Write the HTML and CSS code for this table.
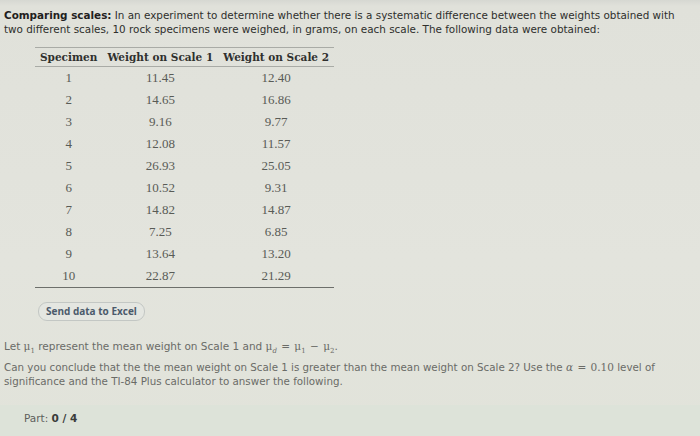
FILE: index.html
```html
<!DOCTYPE html>
<html lang="en">
<head>
<meta charset="utf-8">
<title>Comparing scales</title>
<link rel="stylesheet" href="styles.css">
</head>
<body>
<main class="page">
  <p class="intro"><b>Comparing scales:</b> In an experiment to determine whether there is a systematic difference between the weights obtained with two different scales, 10 rock specimens were weighed, in grams, on each scale. The following data were obtained:</p>

  <table class="data">
    <thead>
      <tr><th>Specimen</th><th>Weight on Scale 1</th><th>Weight on Scale 2</th></tr>
    </thead>
    <tbody>
      <tr><td>1</td><td>11.45</td><td>12.40</td></tr>
      <tr><td>2</td><td>14.65</td><td>16.86</td></tr>
      <tr><td>3</td><td>9.16</td><td>9.77</td></tr>
      <tr><td>4</td><td>12.08</td><td>11.57</td></tr>
      <tr><td>5</td><td>26.93</td><td>25.05</td></tr>
      <tr><td>6</td><td>10.52</td><td>9.31</td></tr>
      <tr><td>7</td><td>14.82</td><td>14.87</td></tr>
      <tr><td>8</td><td>7.25</td><td>6.85</td></tr>
      <tr><td>9</td><td>13.64</td><td>13.20</td></tr>
      <tr><td>10</td><td>22.87</td><td>21.29</td></tr>
    </tbody>
  </table>

  <button class="excel" type="button">Send data to Excel</button>

  <p class="let">Let <span class="m">μ<sub>1</sub></span> represent the mean weight on Scale 1 and <span class="m">μ<sub><i>d</i></sub>&nbsp;=&nbsp;μ<sub>1</sub>&nbsp;−&nbsp;μ<sub>2</sub></span>.</p>
  <p class="question">Can you conclude that the the mean weight on Scale 1 is greater than the mean weight on Scale 2? Use the <span class="m"><i>α</i>&nbsp;=&nbsp;0.10</span> level of significance and the TI-84 Plus calculator to answer the following.</p>

  <div class="part">Part: <b>0 / 4</b></div>
</main>
</body>
</html>
```

FILE: styles.css
```css
html, body {
  margin: 0;
  padding: 0;
}

body {
  background: #e1e2db;
  font-family: "DejaVu Sans", Verdana, sans-serif;
  color: #2b2c2a;
  width: 700px;
  height: 436px;
  overflow: hidden;
}

.page {
  display: flex;
  flex-direction: column;
  align-items: flex-start;
  height: 436px;
  background: linear-gradient(180deg, #d6d8d2 0px, #e0e1da 6px, #e3e4dd 60%, #e1e3da 100%);
}

.intro {
  margin: 8px 0 0 4px;
  font-size: 10.4px;
  line-height: 14px;
  width: 684px;
  color: #2e2f2c;
}

.intro b {
  color: #1f2020;
}

.data {
  margin: 11px 0 0 35px;
  border-collapse: collapse;
  width: 298px;
  border-top: 1px solid #a9aba6;
  border-bottom: 1px solid #6d6f6b;
}

.data th {
  font-family: "DejaVu Serif", Georgia, serif;
  font-weight: bold;
  font-size: 10.5px;
  color: #2f302e;
  height: 18px;
  padding: 0 5px;
  white-space: nowrap;
  border-bottom: 1px solid #a9aba6;
}

.data td {
  font-family: "Liberation Serif", "Times New Roman", serif;
  font-size: 13px;
  color: #595b56;
  text-align: center;
  height: 22px;
  padding: 0;
}

.data td:first-child {
  width: 66px;
}

.excel {
  margin: 14px 0 0 38px;
  height: 19px;
  padding: 0 7px;
  border: 1px solid #c3c7c4;
  border-radius: 9px;
  background: #e4e6e1;
  font-family: "Open Sans", sans-serif;
  font-weight: 700;
  font-size: 10px;
  color: #4b5a6b;
  line-height: 17px;
}

.let {
  margin: 18px 0 0 4px;
  font-size: 10.5px;
  line-height: 14px;
  color: #6a6b67;
}

.question {
  margin: 7px 0 0 4px;
  width: 664px;
  font-size: 10.3px;
  line-height: 14px;
  color: #6a6b67;
}

.m {
  font-family: "DejaVu Serif", serif;
  font-size: 10.5px;
  word-spacing: 1px;
}

.m sub {
  font-size: 7px;
  line-height: 0;
}

.part {
  margin-top: auto;
  align-self: stretch;
  height: 31px;
  box-sizing: border-box;
  padding: 6px 0 0 24px;
  font-size: 10.5px;
  line-height: 14px;
  color: #5e605c;
  background: #dde3d9;
}

.part b {
  color: #3a3c3a;
}
```
